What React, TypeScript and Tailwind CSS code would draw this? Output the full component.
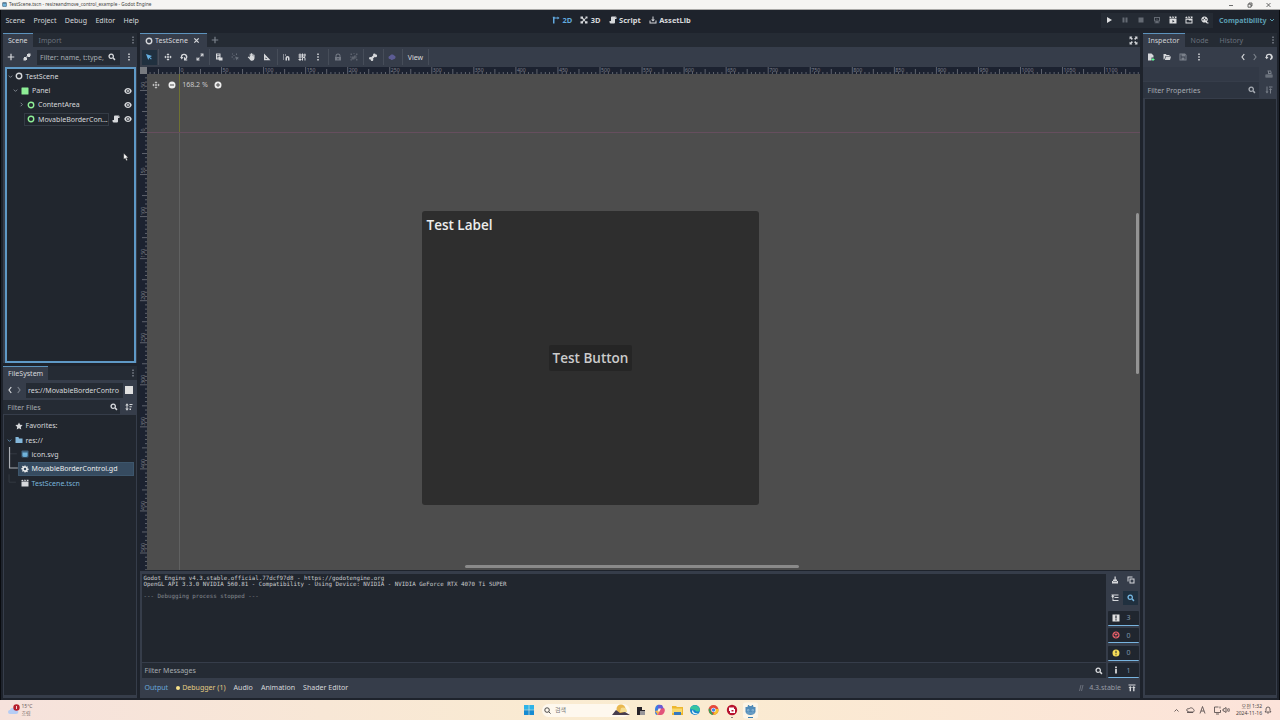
import React from 'react';

const icons: Record<string, React.ReactNode> = {
  add: <path d="M6.800 1.500h2.400v5.300h5.300v2.400H9.200v5.300H6.800V9.200H1.500V6.800h5.300z" />,
  link: <path d="M10 1h5v5h-1v2h-4V7H9L7 9v1h1v4H6v1H1v-5h1V8h4l2-2V2h2z" fillRule="evenodd" />,
  search: <path d="M6.500 1a5.500 5.500 0 1 0 2.700 10.200l3.600 3.700 2.200-2.200-3.700-3.600A5.500 5.500 0 0 0 6.500 1zm0 2.500a3 3 0 1 1 0 6 3 3 0 0 1 0-6z" fillRule="evenodd" />,
  dots: <path d="M6.500 1.200h3v3h-3zm0 5.300h3v3h-3zm0 5.300h3v3h-3z" />,
  control: <circle cx="8" cy="8" r="5.500" fill="none" stroke="currentColor" strokeWidth="2.800" />,
  panel: <rect x="1" y="1" width="14" height="14" rx="1" />,
  eye: (
    <>
      <path d="M8 2C4.500 2 1.500 4.500.5 8c1 3.500 4 6 7.500 6s6.500-2.500 7.500-6C14.500 4.500 11.500 2 8 2zm0 2.300a3.700 3.700 0 1 1 0 7.400 3.700 3.700 0 0 1 0-7.400z" fillRule="evenodd" />
      <circle cx="8" cy="8" r="2" />
    </>
  ),
  script: <path d="M6 1a2 2 0 0 0-2 2v7H1v2a3 3 0 0 0 3 3h6a2 2 0 0 0 2-2V6h3V3a2 2 0 0 0-2-2zm6 2h1v1h-1z" fillRule="evenodd" />,
  down: <path d="M4 6l4 4 4-4" fill="none" stroke="currentColor" strokeWidth="2" />,
  right: <path d="M6 4l4 4-4 4" fill="none" stroke="currentColor" strokeWidth="2" />,
  back: <path d="M10.500 2L6 8l4.500 6" fill="none" stroke="currentColor" strokeWidth="2.400" />,
  forward: <path d="M5.500 2L10 8l-4.500 6" fill="none" stroke="currentColor" strokeWidth="2.400" />,
  close: <path d="M3 3l10 10M13 3L3 13" fill="none" stroke="currentColor" strokeWidth="2.800" />,
  select: <path d="M2 2l4.500 12 2-4.500L12 13l1.500-1.500L10 8.500 14 6z" />,
  move: <path d="M8 .5L5 4h6zM8 15.500L5 12h6zM.5 8L4 5v6zM15.500 8L12 5v6zM7 5h2v2h2v2H9v2H7V9H5V7h2z" />,
  rotate: <path d="M8 1.500A6.300 6.300 0 0 0 1.700 8H0l3.500 5L7 8H4.200A3.800 3.800 0 1 1 10 11.200V8.500H8V15h6.500v-2H12A6.300 6.300 0 0 0 8 1.500z" />,
  scale: <path d="M9 1h6v6h-2V4.500l-3 3L8.500 6l3-3H9zM7 15H1V9h2v2.500l3-3L7.500 10l-3 3H7z" />,
  list: <path d="M2 1h9v8h4v6H8l-1-2H2zm2 2v1.500h5V3zm0 3v1.500h5V6zm0 3v1.500h3V9z" fillRule="evenodd" />,
  pivot: <path d="M2 1h2v2H2zm3 3h2v2H5zM1 7h3v2H1zm9-6h2v3h-2zM8 7l3 8 1.500-3 2.500 1-1-3 2-1zM5 11h2v2H5z" />,
  hand: <path d="M5.500 1.500h2V6H8V.5h2V6h.5V1.500h2V7h.5V3.500h2V10c0 3-2 5.500-5 5.500-2.500 0-4-1-5-3.500L1.500 8.500 3 7l2.500 2z" />,
  ruler: <path d="M2 1l13 13.500H2zm3 7.500V12h3.500z" fillRule="evenodd" />,
  smart: <path d="M2 3h2v2H2zm4 0h2v2H6zM2 7h2v2H2zm0 4h2v2H2zm5 4V10a4 4 0 0 1 8 0v5h-3v-5a1 1 0 0 0-2 0v5z" />,
  grid: <path d="M3 1h2v2h3V1h2v2h3V1h1.500v2H16v2h-1.500v3H9v1H5v3h2v2H5v2H3v-2H1v-2h2V9H1V7h2V5H1V3h2zm2 4v2h3V5zm5 0v2h3V5zM8 15v-4a3.500 3.500 0 0 1 7 0v4h-2v-4a1 1 0 0 0-3 0v4z" fillRule="evenodd" />,
  lock: <path d="M8 1a5 5 0 0 0-5 5v2H2v7h12V8h-1V6a5 5 0 0 0-5-5zm0 2a3 3 0 0 1 3 3v2H5V6a3 3 0 0 1 3-3zM7 10h2v3H7z" fillRule="evenodd" />,
  group: <path d="M1 1h3v3H1zm11 0h3v3h-3zM1 12h3v3H1zm11 0h3v3h-3zM3 7h5V5h5v6H9v2H3zm8 0h-1v2h1zM6 1h4v1H6zm-5 5h1v4H1z" fillRule="evenodd" />,
  bone: <path d="M11 .8a2.600 2.600 0 0 0-2.500 3.500L4.300 8.500A2.600 2.600 0 1 0 3.500 13 2.600 2.600 0 1 0 7.800 11.500l4-4A2.600 2.600 0 1 0 13.300 3 2.600 2.600 0 0 0 11 .8z" />,
  cloud: <path d="M1 9c0-2 1-3 3-3 .5-2 2-3 4-3s3.500.5 4 2c2 0 3 1.500 3 3.500S13.500 13 11 12.500C9 15 5.500 14.500 5 12 2.500 12 1 11 1 9z" />,
  two: <path d="M1.500 1.500h4V3H11V1l4 3-4 3V5H5.500v.5H5V15H2V5.500z" />,
  three: <path d="M1 1h5v3l2.500 2L11 4V1h4v4h-3l-2.500 3L11 10.500h4V15h-5v-3.500L8 9.500 6 12v3H1v-4.500h3L6.500 8 4 5.500H1z" />,
  asset: <path d="M7 1h2v6h3L8 11 4 7h3zM1 9h2v4h10V9h2v6H1z" />,
  play: <path d="M4 2l10 6-10 6z" />,
  pause: <path d="M3 3h4v10H3zm6 0h4v10H9z" />,
  stop: <rect x="3" y="3" width="10" height="10" />,
  remote: <path d="M2 2h12v9h-3v2h2v1.500H3V13h2v-2H2zm2 2v5h8V4zm3 1l3 1.500L7 8z" fillRule="evenodd" />,
  movie: <path d="M1 1l3 0 1 3h2L6 1h3l1 3h2l-1-3h4v4H1zm0 5h14v9H1zm6 2v5l4-2.500z" fillRule="evenodd" />,
  custom: <path d="M1 2l3-1 1 3h2L6 1h3l1 3h2l-1-3h4v4H1zm0 4h14v9H1zm2 1.500V13h10V9H8L7 7.500z" fillRule="evenodd" />,
  reel: <path d="M7 1a6 6 0 1 0 2 11.500c1 1.500 3 2.500 6 2.500v-2c-2 0-3-.5-3-2A6 6 0 0 0 7 1zm0 1.800a1.500 1.500 0 1 1 0 3 1.500 1.500 0 0 1 0-3zm-3 3a1.500 1.500 0 1 1 0 3 1.500 1.500 0 0 1 0-3zm6 0a1.500 1.500 0 1 1 0 3 1.500 1.500 0 0 1 0-3z" fillRule="evenodd" />,
  expand: <path d="M1 1h5L4.500 2.500 7 5 5 7 2.500 4.500 1 6zm9 0h5v5l-1.500-1.500L11 7 9 5l2.500-2.500zM1 10l1.500 1.500L5 9l2 2-2.500 2.500L6 15H1zm14 0v5h-5l1.500-1.500L9 11l2-2 2.500 2.500z" />,
  fileNew: (
    <>
      <path d="M2 1h7l4 4v4H9v6H2z" />
      <path d="M11 10h2v2h2v2h-2v2h-2v-2H9v-2h2z" fill="#5fff97" />
    </>
  ),
  folderOpen: <path d="M1 2h5l1 2h6v2H5l-2 6-2 1zm5 5h10l-2 7H3.500z" />,
  save: <path d="M1 1h11l3 3v11H1zm2 2v10h2V9h6v4h2V5l-1-1v3H5V3z" fillRule="evenodd" />,
  history: <path d="M8 1.500A6.300 6.300 0 0 0 1.700 8H0l3.500 4.500L7 8H4.200a3.800 3.800 0 1 1 5.500 3.400L10.500 14A6.300 6.300 0 0 0 8 1.500z" />,
  docs: <path d="M5 1h7v2h1v5H6V3H5zm3 2v3h3V3zM1 9h14v6H1zm2 2v2h2v-2zm4 0v2h2v-2zm4 0v2h2v-2z" fillRule="evenodd" />,
  sortProps: <path d="M3 1h2v10h2l-3 4-3-4h2zm5 0h7v2H8zm3 3l3 4h-2v7h-2V8H8z" />,
  sort: <path d="M4 .5L7.500 5H5v6h2.500L4 15.500.5 11H3V5H.5zM9 2h6v2.200H9zm0 4.500h4.500v2.200H9zm0 4.500h3v3H9z" />,
  star: <path d="M8 .8l2.200 4.700 5 .7-3.600 3.600.9 5.200L8 12.500 3.500 15l.9-5.200L.8 6.200l5-.7z" />,
  folder: <path d="M1 2h6l1 3h7v9H1z" />,
  gear: <path d="M7 1h2l.5 2 1.500.6L12.800 2.500l1 1.300-1 1.800.6 1.400 2 .5v2l-2 .5-.6 1.400 1 1.800-1.300 1.200-1.700-1-1.400.6L9 15H7l-.5-2-1.400-.6-1.800 1-1.200-1.300 1-1.700-.6-1.400-2-.5v-2l2-.5.6-1.400-1-1.800 1.300-1.200 1.700 1L6.500 3zM8 5.500a2.500 2.500 0 1 0 0 5 2.500 2.500 0 0 0 0-5z" fillRule="evenodd" />,
  clap: <path d="M1 2l3-.5 1 2.500h2L6 1.500h3L10 4h2l-1-2.500h4V5H1zm0 4h14v9H1z" />,
  robot: (
    <>
      <rect x="1" y="1" width="14" height="14" rx="2" fill="#41637f" />
      <path d="M3 5h10v6a5 3 0 0 1-10 0z" fill="#6aafd8" />
      <path d="M5 7h2v2H5zm4 0h2v2H9z" fill="#8fc3e0" />
    </>
  ),
  broom: <path d="M7 1h2.500v6H12v3h2v5H2v-5h2V7h3zM4 10v1h8v-1z" fillRule="evenodd" />,
  copy: <path d="M1 1h10v2H3v8H1zm4 4h10v10H5zm2 2v6h6V7z" fillRule="evenodd" />,
  collapse: <path d="M1 1h14v2.200H5V4h1.500L3.500 9 .5 4H2v-.8H1zm6 5h8v2.200H7zM3 9h2v3h10v2.200H3z" />,
  msg: <path d="M1 1h14v14H1zm5.800 2v6h2.400V3zm0 7.500v2.500h2.400v-2.500z" fillRule="evenodd" />,
  info: <path d="M6.300 1h3.400v3.400H6.300zm0 5h3.400v9H6.300z" />,
  pin: <path d="M1 1h14v2.200H1zm3.500 3L8 8H6v6.500H3.200V8H1zm7 0L15 8h-2v6.500h-2.800V8H8z" />,
  warn: <path d="M8 1a7 7 0 1 0 0 14A7 7 0 0 0 8 1zM7 3.500h2v5H7zm0 7h2v2H7z" fillRule="evenodd" />,
  error: (
    <>
      <circle cx="8" cy="8" r="6" fill="none" stroke="currentColor" strokeWidth="2.400" />
      <path d="M5 5l6 6M11 5l-6 6" fill="none" stroke="currentColor" strokeWidth="2.200" />
    </>
  ),
  minus: <path d="M8 1a7 7 0 1 0 0 14A7 7 0 0 0 8 1zM4 7h8v2H4z" fillRule="evenodd" />,
  plus: <path d="M8 1a7 7 0 1 0 0 14A7 7 0 0 0 8 1zM7 4h2v3h3v2H9v3H7V9H4V7h3z" fillRule="evenodd" />,
  slashes: <path d="M5 14L8 2M9 14l3-12" fill="none" stroke="currentColor" strokeWidth="1.800" />,
};

const Icon = ({ name, className = 'size-2' }: { name: string; className?: string }) => (
  <svg viewBox="0 0 16 16" fill="currentColor" className={`shrink-0 ${className}`}>
    {icons[name]}
  </svg>
);

const Cell = ({ name, className = '' }: { name: string; className?: string }) => (
  <div className={`flex h-4 w-4 shrink-0 items-center justify-center ${className}`}>
    <Icon name={name} />
  </div>
);

const toolGroups = [
  [{ icon: 'move' }, { icon: 'rotate' }, { icon: 'scale' }],
  [{ icon: 'list' }, { icon: 'pivot', tone: 'text-[#666d78]' }, { icon: 'hand' }, { icon: 'ruler' }],
  [{ icon: 'smart' }, { icon: 'grid' }, { icon: 'dots' }],
  [{ icon: 'lock', tone: 'text-[#737984]' }, { icon: 'group', tone: 'text-[#5d636e]' }],
  [{ icon: 'bone' }],
  [{ icon: 'cloud', tone: 'text-[#5c5c94]' }],
];

const TitleBar = () => (
  <div className="flex h-[10px] items-center border-b border-[#aaa9a7] bg-[#f5f4f2] pl-[2px] text-[#444]">
    <Icon name="robot" className="size-[5px]" />
    <span className="ml-[2px] text-[4.720px] leading-none">TestScene.tscn - resizeandmove_control_example - Godot Engine</span>
    <svg viewBox="0 0 46 8" className="mr-[7px] ml-auto h-2 w-[46px]" fill="none" stroke="#333" strokeWidth="0.700">
      <path d="M2 4.500h4M39.500 2l4 4M43.500 2l-4 4M21 3.200h3v3h-3zM22 3V2h3v3h-1" />
    </svg>
  </div>
);

const MenuBar = () => (
  <div className="flex h-[23px] shrink-0 items-center pb-[3px]">
    <div className="flex w-[551px] gap-[8.400px] pl-[4.500px]">
      {['Scene', 'Project', 'Debug', 'Editor', 'Help'].map((item) => (
        <span key={item}>{item}</span>
      ))}
    </div>
    <div className="flex items-center gap-[8px] text-[7.500px] font-bold">
      {[
        { icon: 'two', label: '2D' },
        { icon: 'three', label: '3D' },
        { icon: 'script', label: 'Script' },
        { icon: 'asset', label: 'AssetLib' },
      ].map((item) => (
        <div key={item.label} className={`flex items-center gap-[2.500px] ${item.label === '2D' ? 'text-[#62a9df]' : ''}`}>
          <Icon name={item.icon} />
          <span>{item.label}</span>
        </div>
      ))}
    </div>
    <div className="ml-auto flex h-[15px] items-center bg-[#252b34]">
      {['play', 'pause', 'stop', 'remote', 'movie', 'custom', 'reel'].map((name) => (
        <Cell key={name} name={name} className={['pause', 'stop', 'remote'].includes(name) ? 'text-[#646a73]' : 'text-[#dedfe1]'} />
      ))}
    </div>
    <div className="ml-[6px] flex items-center pr-[3px] font-bold text-[#5c9eb2]">
      <span className="w-[49px]">Compatibility</span>
      <Icon name="down" />
    </div>
  </div>
);

const SceneDock = () => (
  <div className="flex h-[330px] flex-col bg-[#363d4a]">
    <div className="flex h-[14px] shrink-0 items-center bg-[#252b34]">
      <div className="flex h-full items-center border-t border-[#5d93bd] bg-[#363d4a] px-[5px]">
        <span>Scene</span>
      </div>
      <span className="ml-[6px] text-[#6a717c]">Import</span>
      <Icon name="dots" className="mr-0 ml-auto size-2 text-[#7b818b]" />
    </div>
    <div className="flex h-[20px] shrink-0 items-center">
      <Cell name="add" />
      <Cell name="link" />
      <div className="ml-[2px] flex h-[15px] w-[83px] items-center bg-[#252b34] pr-[3px] pl-[3px]">
        <span className="w-[68px] whitespace-nowrap text-[#a6abb2]">Filter: name, t:type,</span>
        <Icon name="search" className="size-2" />
      </div>
      <Icon name="dots" className="ml-[4.500px] size-2" />
    </div>
    <div className="mr-[1px] ml-[2px] flex-1 border-2 border-[#5f99c6] bg-[#21262e]">
      <div className="flex h-[14.350px] items-center">
        <Icon name="down" className="size-[7px] text-[#8a9099]" />
        <Icon name="control" className="ml-[0.500px] size-2" />
        <span className="ml-[3px]">TestScene</span>
      </div>
      <div className="flex h-[14.350px] items-center pl-[5px]">
        <Icon name="down" className="size-[7px] text-[#8a9099]" />
        <Icon name="panel" className="ml-[2px] size-2 text-[#8eef97]" />
        <span className="ml-[3px]">Panel</span>
        <Icon name="eye" className="mr-[2.500px] ml-auto size-2" />
      </div>
      <div className="flex h-[14.350px] items-center pl-[11px]">
        <Icon name="right" className="size-[7px] text-[#8a9099]" />
        <Icon name="control" className="ml-[2px] size-2 text-[#8eef97]" />
        <span className="ml-[3px]">ContentArea</span>
        <Icon name="eye" className="mr-[2.500px] ml-auto size-2" />
      </div>
      <div className="flex h-[14.350px] items-center pl-[17px]">
        <div className="flex h-[13px] w-[85px] items-center border border-[#343b45] pl-[2px]">
          <Icon name="control" className="size-2 text-[#8eef97]" />
          <span className="ml-[3px] whitespace-nowrap">MovableBorderCon...</span>
        </div>
        <Icon name="script" className="mr-[4px] ml-auto size-2" />
        <Icon name="eye" className="mr-[2.500px] size-2" />
      </div>
    </div>
  </div>
);

const FileSystemDock = () => (
  <div className="flex flex-1 flex-col bg-[#363d4a]">
    <div className="flex h-[14px] shrink-0 items-center bg-[#252b34]">
      <div className="flex h-full items-center border-t border-[#5d93bd] bg-[#363d4a] px-[5px]">
        <span>FileSystem</span>
      </div>
      <Icon name="dots" className="ml-auto size-2 text-[#7b818b]" />
    </div>
    <div className="flex h-[20px] shrink-0 items-center pl-[2.500px]">
      <Icon name="back" />
      <Icon name="forward" className="ml-[1px] size-2 text-[#7b818b]" />
      <div className="ml-[3px] flex h-[15px] w-[97px] items-center bg-[#252b34] pl-[2.500px] whitespace-nowrap">
        <span>res://MovableBorderContro</span>
      </div>
      <div className="ml-[2.500px] size-[8px] bg-[#e0e0e0]" />
    </div>
    <div className="flex h-[14px] shrink-0 items-center">
      <div className="flex h-[14px] w-[117px] items-center bg-[#252b34] pl-[4.500px]">
        <span className="text-[#a6abb2]">Filter Files</span>
        <Icon name="search" className="mr-[2px] ml-auto size-2" />
      </div>
      <Icon name="sort" className="ml-[4.500px] size-2" />
    </div>
    <div className="mx-[1px] mt-[1px] mb-[3px] flex-1 bg-[#21262e] pt-[3.500px]">
      <div className="flex h-[14.350px] items-center pl-[10.500px]">
        <Icon name="star" />
        <span className="ml-[3px]">Favorites:</span>
      </div>
      <div className="flex h-[14.350px] items-center pl-[2px]">
        <Icon name="down" className="size-[7px] text-[#5d8fb5]" />
        <Icon name="folder" className="ml-[2px] size-2 text-[#84b7da]" />
        <span className="ml-[2.500px]">res://</span>
      </div>
      <div className="flex">
        <svg viewBox="0 0 14 44" className="h-[43px] w-[14px] shrink-0" fill="none">
          <path d="M5 28v8h7M5 7h8" stroke="#3c424b" strokeWidth="0.700" />
          <path d="M5.500 0v21.500H14" stroke="#a9adb3" strokeWidth="1.200" />
        </svg>
        <div className="w-[116px]">
          <div className="flex h-[14.350px] items-center pl-[3px]">
            <Icon name="robot" />
            <span className="ml-[2.500px]">icon.svg</span>
          </div>
          <div className="flex h-[14.350px] items-center border border-[#3d566c] bg-[#364b60] pl-[2px] text-[#eceded]">
            <Icon name="gear" />
            <span className="ml-[2.500px]">MovableBorderControl.gd</span>
          </div>
          <div className="flex h-[14.350px] items-center pl-[3px]">
            <Icon name="clap" />
            <span className="ml-[2.500px] text-[#78b4da]">TestScene.tscn</span>
          </div>
        </div>
      </div>
    </div>
  </div>
);

const UNIT = 42.05;

const HorizontalRuler = () => (
  <svg width="993" height="7" className="bg-[#1c2230]">
    {Array.from({ length: 236 }, (_, i) => {
      const x = 32.5 + (i - 7) * (UNIT / 10);
      const major = (i - 7) % 10 === 0;
      const half = (i - 7) % 5 === 0;
      return <path key={i} d={`M${x} ${major ? 0 : half ? 2 : 5}V7`} stroke="#7c7f88" strokeWidth="0.7" />;
    })}
    {Array.from({ length: 23 }, (_, i) => (
      <text key={i} x={33.5 + i * UNIT} y="5" fontSize="5.2" fill="#7c7f88">
        {i * 50}
      </text>
    ))}
  </svg>
);

const VerticalRuler = () => (
  <svg width="7" height="496" className="shrink-0 bg-[#1c2230]">
    {Array.from({ length: 118 }, (_, i) => {
      const y = 58.5 + (i - 13) * (UNIT / 10);
      const major = (i - 13) % 10 === 0;
      const half = (i - 13) % 5 === 0;
      return <path key={i} d={`M${major ? 0 : half ? 2 : 5} ${y}H7`} stroke="#7c7f88" strokeWidth="0.7" />;
    })}
    {Array.from({ length: 12 }, (_, i) => (
      <text key={i} transform={`translate(5 ${57.5 + (i - 1) * UNIT}) rotate(-90)`} fontSize="5.2" fill="#7c7f88">
        {(i - 1) * 50}
      </text>
    ))}
  </svg>
);

const Viewport = () => (
  <div className="flex h-[503px] flex-col">
    <div className="flex h-[7px]">
      <div className="h-[7px] w-[7px] shrink-0 bg-[#777a80]" />
      <HorizontalRuler />
    </div>
    <div className="flex h-[496px]">
      <VerticalRuler />
      <div className="relative flex-1 overflow-hidden bg-[#4d4d4d]">
        {/* Origin axes */}
        <div className="absolute top-0 left-[32px] h-[58px] w-px bg-[#6f7232]" />
        <div className="absolute top-[58px] left-[32px] h-[440px] w-px bg-[#606161]" />
        <div className="absolute top-[58px] left-0 h-px w-full bg-[#664e5e]" />
        <div className="absolute top-[5px] left-[5px] flex items-center text-[#ededed]">
          <Icon name="move" className="size-2 text-[#c4c4c4]" />
          <Icon name="minus" className="ml-[8px] size-2" />
          <span className="ml-[6px] w-[26px] text-center whitespace-nowrap text-[#c9c9c9]">168.2 %</span>
          <Icon name="plus" className="ml-[6px] size-2" />
        </div>
        {/* Edited scene */}
        <div className="absolute top-[137px] left-[275px] h-[294px] w-[336.500px] rounded-[3px] bg-[#2e2e2e] font-['Open_Sans',sans-serif] text-[13.500px] font-semibold">
          <div className="absolute top-[5px] left-[4.500px] leading-[19px] text-[#ededed]">Test Label</div>
          <div className="absolute top-[134px] left-[127px] flex h-[26px] w-[83px] items-center justify-center rounded-[2px] bg-[#252525] leading-[18px] whitespace-nowrap text-[#cbcbcb]">
            Test Button
          </div>
        </div>
        <div className="absolute top-[139px] right-[1.500px] h-[161px] w-[3px] rounded-full bg-[#949494]" />
        <div className="absolute bottom-[2.500px] left-[318px] h-[3px] w-[334px] rounded-full bg-[#8a8a8a]" />
      </div>
    </div>
  </div>
);

const MainArea = () => (
  <div className="flex w-[1000px] shrink-0 flex-col">
    <div className="flex h-[14px] shrink-0 items-center bg-[#252b34]">
      <div className="flex h-full w-[67px] items-center border-t border-[#5d93bd] bg-[#363d4a] pl-[5px]">
        <Icon name="control" />
        <span className="ml-[2px] w-[37px]">TestScene</span>
        <Icon name="close" className="ml-[1px] size-[7px]" />
      </div>
      <Icon name="add" className="ml-[4px] size-2 text-[#7b818b]" />
      <Icon name="expand" className="mr-[2px] ml-auto size-[9px]" />
    </div>
    <div className="flex h-[20px] shrink-0 items-center bg-[#363d4a] pl-[2px]">
      <div className="flex h-[15px] w-[14.500px] items-center justify-center bg-[#20303f] text-[#65b0e2]">
        <Icon name="select" />
      </div>
      {toolGroups.map((group, index) => (
        <div key={index} className="ml-[1.600px] flex items-center border-l border-[#464d59] pl-[0.700px]">
          {group.map((tool) => (
            <Cell key={tool.icon} name={tool.icon} className={'tone' in tool ? tool.tone : ''} />
          ))}
        </div>
      ))}
      <div className="ml-[1.500px] flex h-[16px] items-center border-x border-[#464d59] px-[5px]">View</div>
    </div>
    <Viewport />
    <div className="mt-[1px] flex h-[127px] flex-col bg-[#363d4a] pt-[3px]">
      <div className="flex h-[104px]">
        <div className="ml-[2px] flex w-[964px] flex-col">
          <div className="h-[88px] bg-[#21262e] pt-[1px] pl-[1.500px] font-['DejaVu_Sans_Mono',monospace] text-[5.810px] leading-[6px] whitespace-pre text-[#c9cbce]">
            <div>Godot Engine v4.3.stable.official.77dcf97d8 - https://godotengine.org</div>
            <div>OpenGL API 3.3.0 NVIDIA 560.81 - Compatibility - Using Device: NVIDIA - NVIDIA GeForce RTX 4070 Ti SUPER</div>
            <div className="mt-[6px] text-[#858a91]">--- Debugging process stopped ---</div>
          </div>
          <div className="mt-[1px] flex h-[15px] items-center bg-[#252b34] pr-[3px] pl-[2.500px] text-[#a6abb2]">
            <span>Filter Messages</span>
            <Icon name="search" className="ml-auto size-2 text-[#d8dadd]" />
          </div>
        </div>
        <div className="ml-[2px] flex w-[31px] flex-col">
          <div className="flex h-[12px] items-center gap-[8px] pl-[3px]">
            <Icon name="broom" />
            <Icon name="copy" />
          </div>
          <div className="mt-[5px] mb-[5px] flex h-[15px] items-center pl-[3px]">
            <Icon name="collapse" />
            <div className="ml-[4px] flex h-[14px] w-[15px] items-center justify-center bg-[#20303f] text-[#75b7e2]">
              <Icon name="search" />
            </div>
          </div>
          <div className="flex flex-col gap-[2.500px]">
            {[
              { icon: 'msg', count: 3, tone: 'text-[#e0e0e0]' },
              { icon: 'error', count: 0, tone: 'text-[#f0626c]' },
              { icon: 'warn', count: 0, tone: 'text-[#f5dc58]' },
              { icon: 'info', count: 1, tone: 'text-[#e0e0e0]' },
            ].map((item) => (
              <div key={item.icon} className="flex h-[15px] items-center rounded-[1px] border-b border-[#78b4e0] bg-[#20262f] pl-[4px]">
                <Icon name={item.icon} className={`size-2 ${item.tone}`} />
                <span className="ml-[6.500px] text-[#7d94ab]">{item.count}</span>
              </div>
            ))}
          </div>
        </div>
      </div>
      <div className="flex h-[19px] items-center pl-[4.500px]">
        <span className="text-[#69a8da]">Output</span>
        <div className="ml-[8px] size-[4px] rounded-full bg-[#f7e28b]" />
        <span className="ml-[2px] text-[#e2cb82]">Debugger (1)</span>
        <span className="ml-[8px]">Audio</span>
        <span className="ml-[8px]">Animation</span>
        <span className="ml-[8px]">Shader Editor</span>
        <Icon name="slashes" className="mr-[4.500px] ml-auto size-2 text-[#6f7580]" />
        <span className="text-[#979ca4]">4.3.stable</span>
        <Icon name="pin" className="mr-[4px] ml-[7px] size-2" />
      </div>
    </div>
  </div>
);

const Inspector = () => (
  <div className="flex w-[134px] shrink-0 flex-col bg-[#363d4a]">
    <div className="flex h-[14px] shrink-0 items-center bg-[#252b34] text-[#6a717c]">
      <div className="flex h-full items-center border-t border-[#5d93bd] bg-[#363d4a] px-[5px] text-[#d0d2d5]">
        <span>Inspector</span>
      </div>
      <span className="ml-[6px]">Node</span>
      <span className="ml-[11px]">History</span>
      <Icon name="dots" className="mr-0 ml-auto size-2 text-[#7b818b]" />
    </div>
    <div className="flex h-[20px] shrink-0 items-center">
      <Cell name="fileNew" />
      <Cell name="folderOpen" />
      <Cell name="save" className="text-[#7b818b]" />
      <Icon name="dots" className="ml-[4px] size-2" />
      <Icon name="back" className="ml-auto size-2" />
      <Icon name="forward" className="ml-[4px] size-2 text-[#7b818b]" />
      <Icon name="history" className="mr-[4px] ml-[6px] size-2" />
    </div>
    <div className="flex h-[14px] shrink-0 items-center">
      <div className="h-full w-[116px] bg-[#323946]" />
      <Icon name="docs" className="mr-[4px] ml-auto size-2 text-[#7b818b]" />
    </div>
    <div className="mt-[1px] flex h-[16px] shrink-0 items-center">
      <div className="flex h-full w-[116px] items-center bg-[#2d3440] pl-[4.500px] text-[#a6abb2]">
        <span>Filter Properties</span>
        <Icon name="search" className="mr-[3px] ml-auto size-2" />
      </div>
      <Icon name="sortProps" className="mr-[4px] ml-auto size-2 text-[#7b818b]" />
    </div>
    <div className="mx-[1.500px] mt-[1px] mb-[3px] flex-1 bg-[#21262e]" />
  </div>
);

const Taskbar = () => (
  <div className="flex h-[20px] items-center bg-linear-to-r from-[#f6e2dc] via-[#faecd0] to-[#fce3da]">
    <svg viewBox="0 0 12 12" className="ml-[8px] size-[12px]">
      <path d="M2 10a2 2 0 0 1 0-4c1-3 5-3 6 0 3 0 3 4 0 4z" fill="#b6cdf5" />
      <circle cx="8.500" cy="3.500" r="3.200" fill="#b51d2c" />
      <path d="M8.500 2v3" stroke="#fff" strokeWidth="0.800" />
    </svg>
    <div className="ml-[1.500px] w-[502px] text-[5px] leading-[7px] text-[#6b5f5d]">
      <div>15°C</div>
      <div>흐림</div>
    </div>
    <svg viewBox="0 0 10 10" className="size-[10px]">
      <path d="M0 0h4.700v4.700H0zM5.300 0H10v4.700H5.300z" fill="#2db3e8" />
      <path d="M0 5.300h4.700V10H0zM5.300 5.300H10V10H5.300z" fill="#168cd2" />
    </svg>
    <div className="ml-[8px] flex h-[13px] w-[88px] items-center rounded-full bg-[#fef8ee] pl-[2.500px] text-[6px] text-[#777]">
      <svg viewBox="0 0 8 8" className="size-[7px]" fill="none" stroke="#333">
        <path d="M5.500 5.500L7.500 7.500" />
        <circle cx="3.500" cy="3.500" r="2.600" />
      </svg>
      <span className="ml-[4px]">검색</span>
      <svg viewBox="0 0 18 12" className="ml-auto h-[12px] w-[18px]">
        <circle cx="9" cy="5" r="4.500" fill="#e9b850" />
        <path d="M9 4a4 4 0 0 1 6 4H8z" fill="#f5dd91" />
        <path d="M0 11l4-5 4 3 5-1 5 3z" fill="#473d4d" />
      </svg>
    </div>
    <svg viewBox="0 0 130 20" className="ml-[4px] h-[20px] w-[130px]">
      <path d="M3 7h5v3h3v5H3z" fill="#262329" />
      <path d="M6 11h5v4H6z" fill="#99979a" />
      <path d="M21 10c0-5 3-6 6-5l-2 7-2 3c-2 0-2-3-2-5z" fill="#397de3" />
      <path d="M24 5h4l2 4-6 1z" fill="#6b5bd4" />
      <path d="M30 8c2 2 0 7-3 7h-4l3-6z" fill="#e2547b" />
      <path d="M21 11l5-1-2 5z" fill="#f2b04a" />
      <path d="M24.500 8.500h2.500l-1.500 3h-2z" fill="#fdf0dc" />
      <path d="M38 6h4l1 1h6v8H38z" fill="#edb72f" />
      <path d="M38 8.500h10V13H38z" fill="#f9d96d" />
      <path d="M40 12h7v3h-7z" fill="#3779bf" />
      <circle cx="61" cy="10" r="5" fill="#1685cf" />
      <path d="M56 9c1-5 9-5 10 1-1 2-4 2-5 0z" fill="#37c4a0" />
      <path d="M59 10c0 2 2 4 5 3-1 2-6 2-6-2z" fill="#eaf7f8" />
      <circle cx="79.500" cy="10" r="5" fill="#e4473b" />
      <path d="M75 8l4.500 7a5 5 0 0 1-4.500-7z" fill="#30a456" />
      <path d="M79 15l3-6h2.300c1 3-2 6-5.300 6z" fill="#f5c52e" />
      <circle cx="79.500" cy="10" r="2.300" fill="#fff" />
      <circle cx="79.500" cy="10" r="1.700" fill="#4285e8" />
      <circle cx="98" cy="10" r="5.200" fill="#b7132e" />
      <path d="M95 7.500h5v1.500h1v4h-5v-2h-1zm2.500 2.500v1.500h2V10z" fill="#fff" fillRule="evenodd" />
      <path d="M97 17.500h2" stroke="#8b8580" strokeWidth="1" />
      <rect x="109" y="2.500" width="15" height="16" rx="2" fill="#fdf5e7" />
      <path d="M111.500 7l2 0 .5-2h1l.5 1h2l.5-1h1l.5 2h2v5c-1 4-9 4-10 0z" fill="#528cb9" />
      <path d="M113.500 9.500h1.500v1.500h-1.500zm4.500 0h1.500v1.500h-1.500zM112.500 13h8" stroke="#a9cbe0" strokeWidth="0.500" fill="none" />
      <path d="M114 17.500h5" stroke="#3a7fb2" strokeWidth="1" />
    </svg>
    <svg viewBox="0 0 60 20" className="mr-[0.500px] ml-auto h-[20px] w-[60px]" fill="none" stroke="#4a4143" strokeWidth="0.800">
      <path d="M1.500 11.500l2-2 2 2M14 11c-1-2 1-3 2-2 1-2 4-1 4 0 2 1 1 3 0 3h-4zM14 12.500h6M27 13.500l2.500-7 2.500 7M28 11h3M45.500 7h-4v5.500h6V10M43 14h3M47 6.500v2M50 9h1l2-1.500v5L51 11h-1zM54 8.500c1 1 1 2 0 3M55.500 8c1 1 1 3 0 4" />
    </svg>
    <div className="w-[29px] text-right text-[5px] leading-[7px] whitespace-nowrap text-[#453d3e]">
      <div>오전 1:32</div>
      <div>2024-11-16</div>
    </div>
    <svg viewBox="0 0 8 8" className="mr-[8px] ml-[2px] size-[8px]" fill="none" stroke="#4a4143" strokeWidth="0.800">
      <path d="M1 6h6L6 4.500V3a2 2 0 0 0-4 0v1.500zM3.200 7h1.600" />
    </svg>
  </div>
);

export default function App() {
  return (
    <div className="relative h-[720px] w-[1280px] overflow-hidden bg-[#1e232c] font-['Noto_Sans','Noto_Sans_CJK_KR',sans-serif] text-[7.060px] leading-[10px] text-[#d6d8db] [&_span]:pb-px">
      <TitleBar />
      <div className="flex h-[690px] flex-col border-x border-[#090b0f] pb-[2px]">
        <MenuBar />
        <div className="flex flex-1 gap-[3px] pl-[2px]">
          <div className="flex w-[134px] shrink-0 flex-col gap-[3px]">
            <SceneDock />
            <FileSystemDock />
          </div>
          <MainArea />
          <Inspector />
        </div>
      </div>
      <Taskbar />
      {/* Mouse pointer */}
      <svg viewBox="0 0 8 10" className="absolute top-[152px] left-[123px] h-[10px] w-[6px]">
        <path d="M1 0v8l2-1.500L4.500 10 6 9 4.500 6H7z" fill="#fff" stroke="#222" strokeWidth="0.500" />
      </svg>
    </div>
  );
}
